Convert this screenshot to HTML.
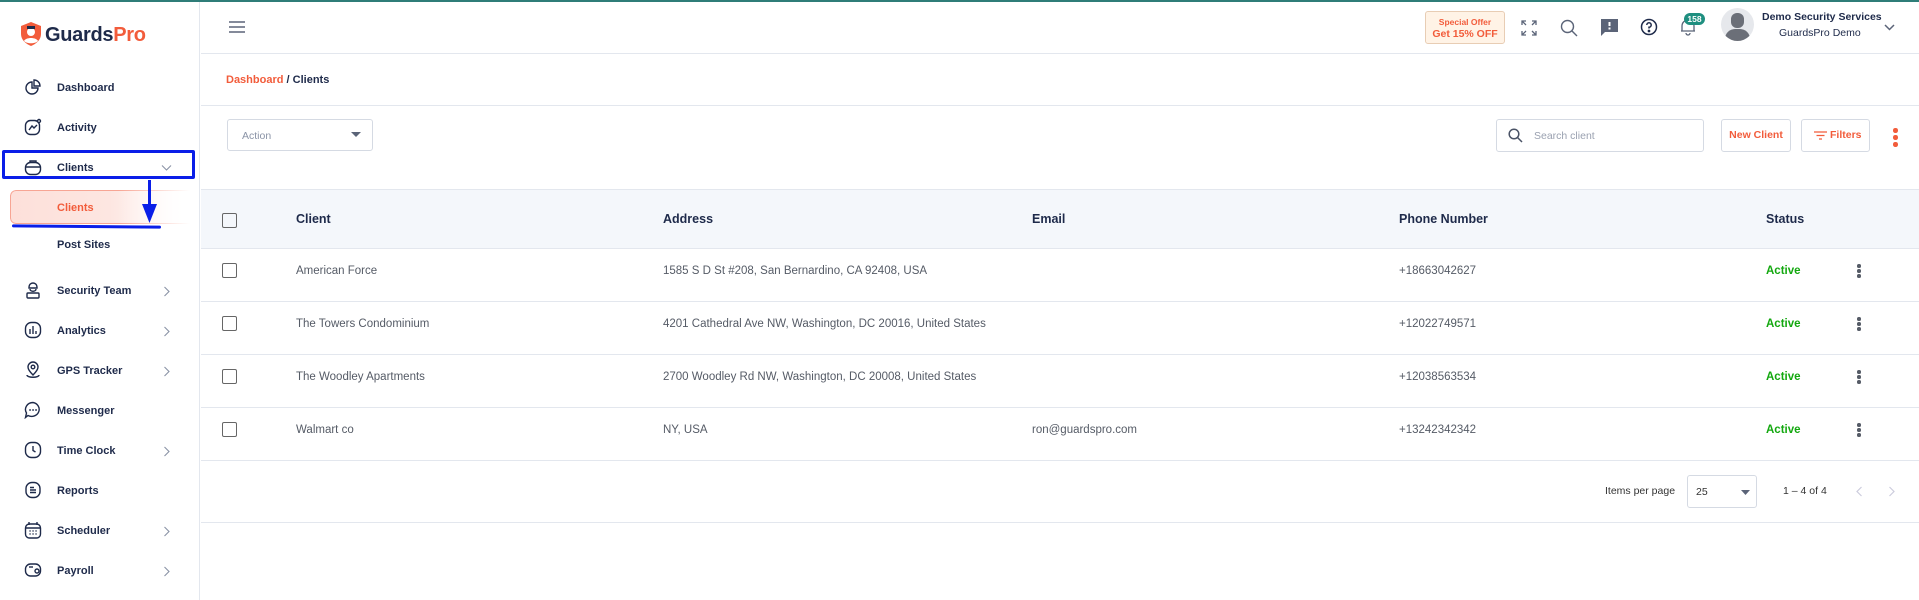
<!DOCTYPE html>
<html><head><meta charset="utf-8">
<style>
*{box-sizing:border-box;margin:0;padding:0}
body{width:1919px;height:600px;overflow:hidden;background:#fff;font-family:"Liberation Sans",sans-serif;color:#1e2a4a;position:relative}
.abs{position:absolute}
.top{left:0;top:0;width:1919px;height:2px;background:#2f7d78}
.side{left:0;top:2px;width:200px;height:598px;border-right:1px solid #e3e7ee;background:#fff}
.mi{position:absolute;left:0;height:20px;width:200px;font-size:11px;font-weight:bold;color:#1e2a4a}
.mi svg{position:absolute;left:24px;top:0}
.mi span{position:absolute;left:57px;top:4px}
.mi svg.ch{left:164px;top:5px}
.hdr{left:201px;top:2px;width:1718px;height:52px;border-bottom:1px solid #e3e7ee}
.bc{left:201px;top:54px;width:1718px;height:52px;border-bottom:1px solid #e3e7ee}
.th{left:201px;top:189px;width:1718px;height:60px;background:#f4f7fb;border-top:1px solid #e3e7ee;border-bottom:1px solid #e3e7ee}
.row{left:201px;width:1718px;height:53px;border-bottom:1px solid #e3e7ee}
.cb{position:absolute;left:21px;width:15px;height:15px;border:1.5px solid #666;border-radius:2px}
.cell{position:absolute;font-size:11.5px;color:#555b66}
.hc{position:absolute;font-size:12.5px;font-weight:bold;color:#1e2a4a;top:22px}
.act{position:absolute;left:1565px;font-size:11.5px;font-weight:bold;color:#13a80f}
.kb{position:absolute;left:1656px;width:4px}
.kb i{display:block;width:3.5px;height:3.5px;border-radius:50%;background:#555b66;margin-bottom:1.5px}
.btn{border:1px solid #d5dae3;border-radius:3px;background:#fff}
</style></head><body>
<div class="abs top"></div>
<div class="abs side">
  <svg class="abs" style="left:20px;top:19px" width="22" height="26" viewBox="0 0 22 26"><path d="M11 1 L21 5 V13 C21 19 16 23 11 25 C6 23 1 19 1 13 V5 Z" fill="#f25c3b"/><circle cx="11" cy="11" r="4" fill="#fff"/><path d="M4 20 C6 16 16 16 18 20 C15 23 7 23 4 20Z" fill="#fff"/><rect x="7" y="5" width="8" height="3" fill="#1e2a4a"/></svg>
  <div class="abs" style="left:45px;top:22px;font-size:20px;font-weight:bold;letter-spacing:-0.3px"><span style="color:#1e2a4a">Guards</span><span style="color:#f25c3b">Pro</span></div>

  <div class="mi" style="top:76px"><svg width="18" height="18" viewBox="0 0 18 18" fill="none" stroke="#1e2a4a" stroke-width="1.4"><path d="M8 4 A6 6 0 1 0 14 10 H8 Z"/><path d="M10 2 A6 6 0 0 1 16 8 H10Z"/></svg><span>Dashboard</span></div>
  <div class="mi" style="top:116px"><svg width="18" height="18" viewBox="0 0 18 18" fill="none" stroke="#1e2a4a" stroke-width="1.4"><rect x="1.5" y="2.5" width="14" height="14" rx="5"/><path d="M5 12 L8 8 L10 10 L13 7"/><circle cx="15" cy="3" r="1.5" fill="#fff"/></svg><span>Activity</span></div>
  <div class="mi" style="top:156px"><svg width="18" height="18" viewBox="0 0 18 18" fill="none" stroke="#1e2a4a" stroke-width="1.4"><rect x="1.5" y="4.5" width="15" height="12" rx="5"/><path d="M6 4.5 V3 H12 V4.5 M1.5 9 H16.5"/></svg><span>Clients</span><svg class="ch" style="left:161px;top:7px" width="11" height="6" viewBox="0 0 11 6" fill="none" stroke="#8a93a6" stroke-width="1.1"><path d="M1 .5L5.5 5L10 .5"/></svg></div>
  <div class="abs" style="left:2px;top:148px;width:193px;height:29px;border:3px solid #0a1ee8;border-radius:2px"></div>
  <div class="abs" style="left:10px;top:188px;width:180px;height:34px;border:1px solid #f7a594;border-right:none;border-radius:6px 0 0 6px;background:linear-gradient(90deg,#fde0da 0%,#fde6e1 55%,#fff 100%);-webkit-mask-image:linear-gradient(90deg,#000 60%,transparent 100%)"></div>
  <div class="abs" style="left:57px;top:200px;font-size:11px;font-weight:bold;color:#f25c3b">Clients</div>
  <div class="abs" style="left:148px;top:178px;width:3px;height:26px;background:#0a1ee8"></div>
  <svg class="abs" style="left:142px;top:202px" width="15" height="19" viewBox="0 0 15 19"><path d="M0 0 H15 L7.5 19Z" fill="#0a1ee8"/></svg>
  <div class="abs" style="left:12px;top:223px;width:149px;height:3px;background:#0a1ee8;border-radius:2px;transform:rotate(0.5deg)"></div>
  <div class="abs" style="left:57px;top:237px;font-size:11px;font-weight:bold">Post Sites</div>

  <div class="mi" style="top:279px"><svg width="18" height="18" viewBox="0 0 18 18" fill="none" stroke="#1e2a4a" stroke-width="1.4"><path d="M5 6 A4 4 0 0 1 13 6 V7 H5Z"/><path d="M6 8 C6 11 12 11 12 8"/><rect x="3" y="12" width="12" height="5" rx="1"/></svg><span>Security Team</span><svg class="ch" width="6" height="11" viewBox="0 0 6 11" fill="none" stroke="#8a93a6" stroke-width="1.1"><path d="M.5 1L5 5.5L.5 10"/></svg></div>
  <div class="mi" style="top:319px"><svg width="18" height="18" viewBox="0 0 18 18" fill="none" stroke="#1e2a4a" stroke-width="1.4"><rect x="1.5" y="1.5" width="15" height="15" rx="6"/><path d="M6 13V8 M9 13V5 M12 13V10"/></svg><span>Analytics</span><svg class="ch" width="6" height="11" viewBox="0 0 6 11" fill="none" stroke="#8a93a6" stroke-width="1.1"><path d="M.5 1L5 5.5L.5 10"/></svg></div>
  <div class="mi" style="top:359px"><svg width="18" height="18" viewBox="0 0 18 18" fill="none" stroke="#1e2a4a" stroke-width="1.4"><path d="M9 14 C5 10 4 8 4 6 A5 5 0 0 1 14 6 C14 8 13 10 9 14Z"/><circle cx="9" cy="6" r="1.8"/><path d="M3 14 C3 17 15 17 15 14"/></svg><span>GPS Tracker</span><svg class="ch" width="6" height="11" viewBox="0 0 6 11" fill="none" stroke="#8a93a6" stroke-width="1.1"><path d="M.5 1L5 5.5L.5 10"/></svg></div>
  <div class="mi" style="top:399px"><svg width="18" height="18" viewBox="0 0 18 18" fill="none" stroke="#1e2a4a" stroke-width="1.4"><path d="M9 1.5 A7.5 7 0 1 1 4 14.5 L1.5 16.5 L2.5 12 A7.5 7 0 0 1 9 1.5Z"/><path d="M6 9h.1M9 9h.1M12 9h.1" stroke-width="1.8" stroke-linecap="round"/></svg><span>Messenger</span></div>
  <div class="mi" style="top:439px"><svg width="18" height="18" viewBox="0 0 18 18" fill="none" stroke="#1e2a4a" stroke-width="1.4"><rect x="1.5" y="1.5" width="15" height="15" rx="6"/><path d="M9 5 V9.5 L11.5 11"/></svg><span>Time Clock</span><svg class="ch" width="6" height="11" viewBox="0 0 6 11" fill="none" stroke="#8a93a6" stroke-width="1.1"><path d="M.5 1L5 5.5L.5 10"/></svg></div>
  <div class="mi" style="top:479px"><svg width="18" height="18" viewBox="0 0 18 18" fill="none" stroke="#1e2a4a" stroke-width="1.4"><rect x="2" y="1.5" width="14" height="15" rx="6"/><path d="M6 6.5H10 M6 9H12 M6 11.5H12"/></svg><span>Reports</span></div>
  <div class="mi" style="top:519px"><svg width="18" height="18" viewBox="0 0 18 18" fill="none" stroke="#1e2a4a" stroke-width="1.4"><rect x="1.5" y="3" width="15" height="14" rx="4"/><path d="M5 1V4 M13 1V4 M1.5 7H16.5"/><path d="M6 10h.1M9 10h.1M12 10h.1M6 13h.1M9 13h.1M12 13h.1" stroke-linecap="round"/></svg><span>Scheduler</span><svg class="ch" width="6" height="11" viewBox="0 0 6 11" fill="none" stroke="#8a93a6" stroke-width="1.1"><path d="M.5 1L5 5.5L.5 10"/></svg></div>
  <div class="mi" style="top:559px"><svg width="18" height="18" viewBox="0 0 18 18" fill="none" stroke="#1e2a4a" stroke-width="1.4"><rect x="1.5" y="3" width="15" height="12" rx="5"/><circle cx="13" cy="10" r="2"/><path d="M5 6H9"/></svg><span>Payroll</span><svg class="ch" width="6" height="11" viewBox="0 0 6 11" fill="none" stroke="#8a93a6" stroke-width="1.1"><path d="M.5 1L5 5.5L.5 10"/></svg></div>
</div>

<div class="abs hdr">
  <svg class="abs" style="left:28px;top:19px" width="16" height="12" viewBox="0 0 16 12" stroke="#5b6478" stroke-width="1.4"><path d="M0 1H16M0 6H16M0 11H16"/></svg>
  <div class="abs" style="left:1224px;top:9px;width:80px;height:33px;background:#fff3e6;border:1px solid #e8cdb4;border-radius:3px;text-align:center;color:#f25c3b">
    <div style="font-size:8.5px;font-weight:bold;margin-top:5px">Special Offer</div>
    <div style="font-size:10.5px;font-weight:bold;margin-top:1px">Get 15% OFF</div></div>
  <svg class="abs" style="left:1320px;top:18px" width="16" height="16" viewBox="0 0 16 16" fill="none" stroke="#5b6478" stroke-width="1.3"><path d="M1 5V1H5M1 1L5 5M11 1H15V5M15 1L11 5M1 11V15H5M1 15L5 11M15 11V15H11M15 15L11 11"/></svg>
  <svg class="abs" style="left:1359px;top:17px" width="18" height="18" viewBox="0 0 18 18" fill="none" stroke="#5b6478" stroke-width="1.4"><circle cx="7.5" cy="7.5" r="6"/><path d="M12 12L17 17"/></svg>
  <svg class="abs" style="left:1400px;top:17px" width="17" height="17" viewBox="0 0 17 17"><path d="M0 0H17V13H4L0 17Z" fill="#5b6478"/><rect x="7.5" y="3" width="2" height="4" fill="#fff"/><rect x="7.5" y="8.5" width="2" height="2" fill="#fff"/></svg>
  <svg class="abs" style="left:1439px;top:16px" width="18" height="18" viewBox="0 0 18 18" fill="none" stroke="#1e2a4a" stroke-width="1.5"><circle cx="9" cy="9" r="7.5"/><path d="M6.8 7 A2.2 2.2 0 1 1 9 9.2V10.5"/><circle cx="9" cy="13" r=".6" fill="#1e2a4a"/></svg>
  <svg class="abs" style="left:1479px;top:16px" width="16" height="18" viewBox="0 0 16 18" fill="none" stroke="#5b6478" stroke-width="1.3"><path d="M2 13 V8 A6 6 0 0 1 14 8 V13 H1 H15 M6 15 A2 2 0 0 0 10 15"/></svg>
  <div class="abs" style="left:1483px;top:11px;width:21px;height:12px;background:#1f8f80;border-radius:6px;color:#fff;font-size:8.5px;font-weight:bold;text-align:center;line-height:12px">158</div>
  <div class="abs" style="left:1520px;top:6px;width:33px;height:33px;border-radius:50%;background:#e6e8ec;overflow:hidden">
    <div style="position:absolute;left:10px;top:5px;width:13px;height:15px;border-radius:6px;background:#6b6f78"></div>
    <div style="position:absolute;left:4px;top:21px;width:25px;height:16px;border-radius:10px 10px 0 0;background:#6b6f78"></div></div>
  <div class="abs" style="left:1561px;top:9px;font-size:10.5px;font-weight:bold;color:#1e2a4a">Demo Security Services</div>
  <div class="abs" style="left:1578px;top:25px;font-size:10.5px;color:#1e2a4a">GuardsPro Demo</div>
  <svg class="abs" style="left:1683px;top:22px" width="11" height="7" viewBox="0 0 11 7" fill="none" stroke="#5b6478" stroke-width="1.5"><path d="M1 1L5.5 5.5L10 1"/></svg>
</div>

<div class="abs bc"><div class="abs" style="left:25px;top:20px;font-size:11px;font-weight:bold"><span style="color:#f25c3b">Dashboard</span> / <span>Clients</span></div></div>

<div class="abs btn" style="left:227px;top:119px;width:146px;height:32px"><span class="abs" style="left:14px;top:10px;font-size:10.5px;color:#8a93a6">Action</span><svg class="abs" style="left:123px;top:12px" width="10" height="6"><path d="M0 0H10L5 5Z" fill="#5b6478"/></svg></div>
<div class="abs btn" style="left:1496px;top:119px;width:208px;height:33px"><svg class="abs" style="left:11px;top:8px" width="15" height="15" viewBox="0 0 15 15" fill="none" stroke="#4a5366" stroke-width="1.5"><circle cx="6" cy="6" r="4.8"/><path d="M9.5 9.5L14 14"/></svg><span class="abs" style="left:37px;top:10px;font-size:10.5px;color:#9aa1b0">Search client</span></div>
<div class="abs btn" style="left:1721px;top:119px;width:70px;height:33px;color:#f25c3b;font-size:10.5px;font-weight:bold;text-align:center;line-height:31px">New Client</div>
<div class="abs btn" style="left:1801px;top:119px;width:69px;height:33px;color:#f25c3b;font-size:10.5px;font-weight:bold;line-height:31px"><svg class="abs" style="left:12px;top:11px" width="13" height="9" viewBox="0 0 13 9" stroke="#f25c3b" stroke-width="1.3"><path d="M0 1H13M2.5 4.5H10.5M5 8H8"/></svg><span style="position:absolute;left:28px">Filters</span></div>
<div class="abs" style="left:1893px;top:128px;width:5px"><div style="width:4.5px;height:4.5px;border-radius:50%;background:#f25c3b;margin-bottom:2.5px"></div><div style="width:4.5px;height:4.5px;border-radius:50%;background:#f25c3b;margin-bottom:2.5px"></div><div style="width:4.5px;height:4.5px;border-radius:50%;background:#f25c3b"></div></div>

<div class="abs th"><div class="cb" style="top:23px"></div>
<div class="hc" style="left:95px">Client</div><div class="hc" style="left:462px">Address</div><div class="hc" style="left:831px">Email</div><div class="hc" style="left:1198px">Phone Number</div><div class="hc" style="left:1565px">Status</div></div>

<div class="abs row" style="top:249px"><div class="cb" style="top:14px"></div><div class="cell" style="left:95px;top:16px">American Force</div><div class="cell" style="left:462px;top:16px">1585 S D St #208, San Bernardino, CA 92408, USA</div><div class="cell" style="left:1198px;top:16px">+18663042627</div><div class="act" style="top:16px">Active</div><div class="kb" style="top:15px"><i></i><i></i><i></i></div></div>
<div class="abs row" style="top:302px"><div class="cb" style="top:14px"></div><div class="cell" style="left:95px;top:16px">The Towers Condominium</div><div class="cell" style="left:462px;top:16px">4201 Cathedral Ave NW, Washington, DC 20016, United States</div><div class="cell" style="left:1198px;top:16px">+12022749571</div><div class="act" style="top:16px">Active</div><div class="kb" style="top:15px"><i></i><i></i><i></i></div></div>
<div class="abs row" style="top:355px"><div class="cb" style="top:14px"></div><div class="cell" style="left:95px;top:16px">The Woodley Apartments</div><div class="cell" style="left:462px;top:16px">2700 Woodley Rd NW, Washington, DC 20008, United States</div><div class="cell" style="left:1198px;top:16px">+12038563534</div><div class="act" style="top:16px">Active</div><div class="kb" style="top:15px"><i></i><i></i><i></i></div></div>
<div class="abs row" style="top:408px"><div class="cb" style="top:14px"></div><div class="cell" style="left:95px;top:16px">Walmart co</div><div class="cell" style="left:462px;top:16px">NY, USA</div><div class="cell" style="left:831px;top:16px">ron@guardspro.com</div><div class="cell" style="left:1198px;top:16px">+13242342342</div><div class="act" style="top:16px">Active</div><div class="kb" style="top:15px"><i></i><i></i><i></i></div></div>

<div class="abs" style="left:201px;top:461px;width:1718px;height:62px;border-bottom:1px solid #e3e7ee">
  <div class="cell" style="left:1404px;top:24px;font-size:10.5px;color:#333">Items per page</div>
  <div class="abs btn" style="left:1486px;top:14px;width:70px;height:33px"><span class="abs" style="left:8px;top:10px;font-size:10.5px;color:#333">25</span><svg class="abs" style="left:53px;top:14px" width="9" height="5"><path d="M0 0H9L4.5 5Z" fill="#5b6478"/></svg></div>
  <div class="cell" style="left:1582px;top:24px;font-size:10.5px;color:#333">1 – 4 of 4</div>
  <svg class="abs" style="left:1655px;top:25px" width="6" height="11" viewBox="0 0 6 11" fill="none" stroke="#ccd" stroke-width="1.2"><path d="M5.5 1L1 5.5L5.5 10"/></svg>
  <svg class="abs" style="left:1688px;top:25px" width="6" height="11" viewBox="0 0 6 11" fill="none" stroke="#ccd" stroke-width="1.2"><path d="M.5 1L5 5.5L.5 10"/></svg>
</div>
</body></html>
